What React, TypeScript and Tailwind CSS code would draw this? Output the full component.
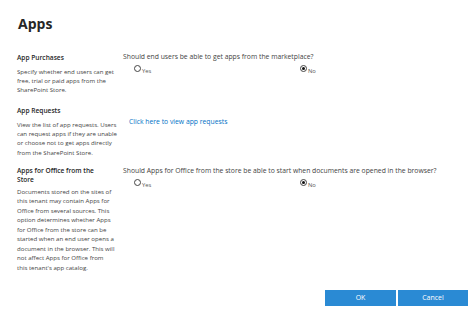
const Radio = ({ label, checked }: { label: string; checked?: boolean }) => (
  <label className="flex items-end gap-[1px]">
    <span className="w-[7px] h-[7px] rounded-full border border-[#444] bg-white flex items-center justify-center">
      {checked && <span className="w-[3px] h-[3px] rounded-full bg-[#111]" />}
    </span>
    <span className="text-[5.8px] leading-[6px] text-[#555] translate-y-[2px]">{label}</span>
  </label>
);

export default function App() {
  return (
    <div className="w-[474px] h-[319px] bg-white font-['Open_Sans',sans-serif] flex flex-col text-[#444] whitespace-nowrap">
      <h1 className="pl-[18px] pt-[15px] text-[14px] font-bold leading-[18px] text-[#262626]">
        Apps
      </h1>

      {/* App Purchases */}
      <div className="grid grid-cols-[123px_1fr] mt-[20px]">
        <div className="pl-[17px]">
          <h4 className="text-[6.6px] font-semibold leading-[9px] text-[#262626]">App Purchases</h4>
          <p className="text-[6.1px] leading-[9.2px] mt-[5px]">
            Specify whether end users can get
            <br />
            free, trial or paid apps from the
            <br />
            SharePoint Store.
          </p>
        </div>
        <div className="-mt-[1px]">
          <p className="text-[6.8px] leading-[9px]">
            Should end users be able to get apps from the marketplace?
          </p>
          <div className="flex pl-[11px] mt-[4px]">
            <div className="w-[166px]">
              <Radio label="Yes" />
            </div>
            <Radio label="No" checked />
          </div>
        </div>
      </div>

      {/* App Requests */}
      <div className="grid grid-cols-[123px_1fr] mt-[11px]">
        <div className="pl-[17px]">
          <h4 className="text-[6.6px] font-semibold leading-[9px] text-[#262626]">App Requests</h4>
          <p className="text-[6.1px] leading-[9.3px] mt-[5px]">
            View the list of app requests. Users
            <br />
            can request apps if they are unable
            <br />
            or choose not to get apps directly
            <br />
            from the SharePoint Store.
          </p>
        </div>
        <div className="pl-[6px]">
          <a className="text-[6.8px] leading-[9px] text-[#0072c6]">Click here to view app requests</a>
        </div>
      </div>

      {/* Apps for Office */}
      <div className="grid grid-cols-[123px_1fr] mt-[9px]">
        <div className="pl-[17px]">
          <h4 className="text-[6.6px] font-semibold leading-[9px] text-[#262626]">
            Apps for Office from the
            <br />
            Store
          </h4>
          <p className="text-[6.1px] leading-[9.5px] mt-[3px]">
            Documents stored on the sites of
            <br />
            this tenant may contain Apps for
            <br />
            Office from several sources. This
            <br />
            option determines whether Apps
            <br />
            for Office from the store can be
            <br />
            started when an end user opens a
            <br />
            document in the browser. This will
            <br />
            not affect Apps for Office from
            <br />
            this tenant's app catalog.
          </p>
        </div>
        <div>
          <p className="text-[6.8px] leading-[9px]">
            Should Apps for Office from the store be able to start when documents are opened in the browser?
          </p>
          <div className="flex pl-[11px] mt-[4px]">
            <div className="w-[166px]">
              <Radio label="Yes" />
            </div>
            <Radio label="No" checked />
          </div>
        </div>
      </div>

      <div className="mt-auto mb-[13px] flex justify-end gap-[2px] pr-[6px]">
        <button className="w-[71px] h-[16px] bg-[#2a8ad4] text-white text-[7px]">OK</button>
        <button className="w-[70px] h-[16px] bg-[#2a8ad4] text-white text-[7px]">Cancel</button>
      </div>
    </div>
  );
}
